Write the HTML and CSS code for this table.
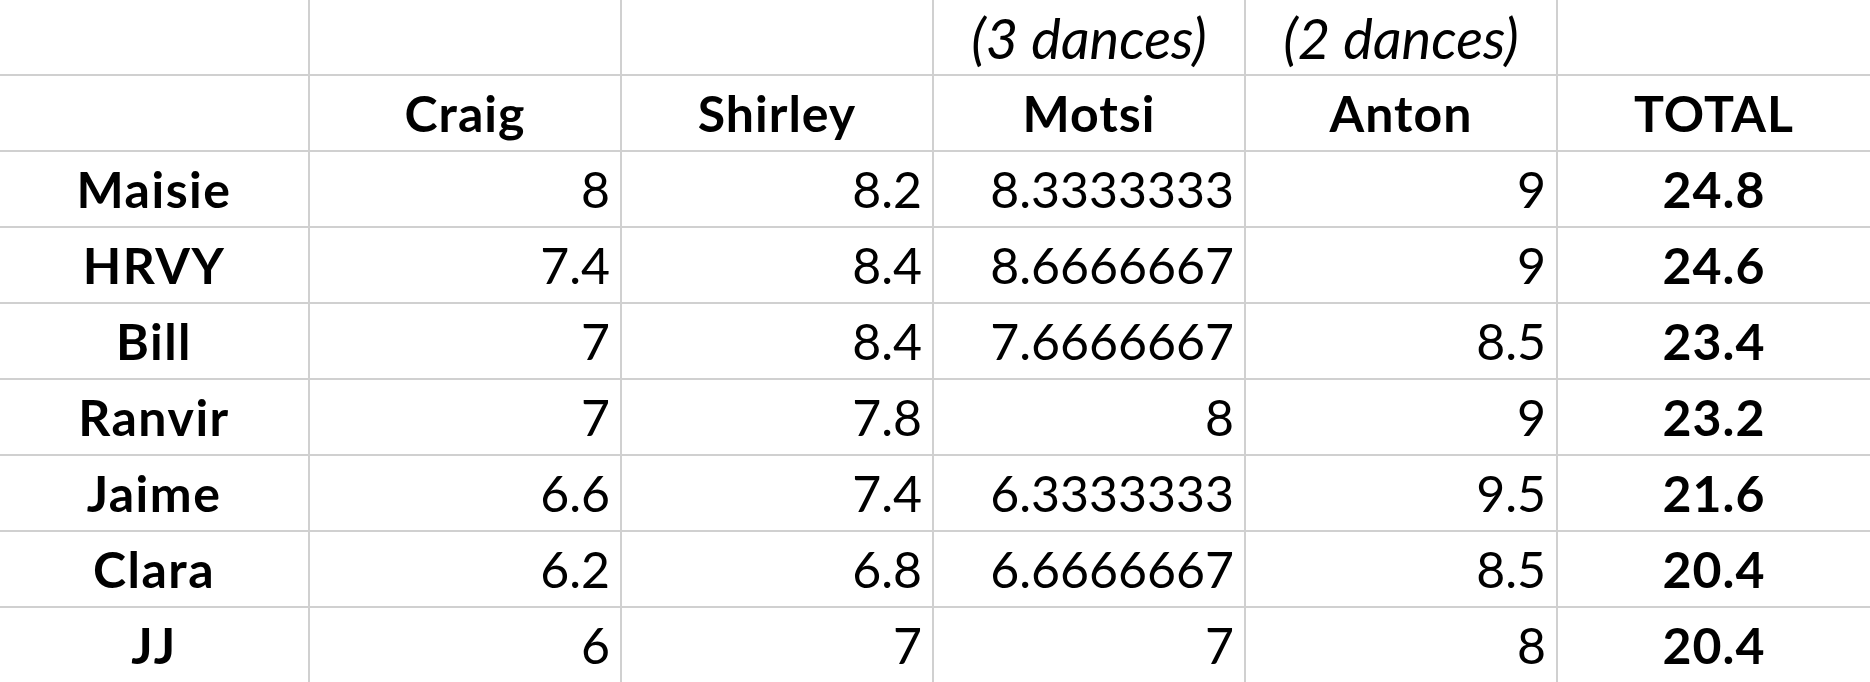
FILE: index.html
```html
<!DOCTYPE html>
<html>
<head>
<meta charset="utf-8">
<link rel="stylesheet" href="styles.css">
</head>
<body>
<div class="sheet">
  <div class="c"></div>
  <div class="c"></div>
  <div class="c"></div>
  <div class="c note">(3 dances)</div>
  <div class="c note">(2 dances)</div>
  <div class="c last"></div>

  <div class="c"></div>
  <div class="c head">Craig</div>
  <div class="c head">Shirley</div>
  <div class="c head">Motsi</div>
  <div class="c head">Anton</div>
  <div class="c head last">TOTAL</div>

  <div class="c name">Maisie</div>
  <div class="c num">8</div>
  <div class="c num">8.2</div>
  <div class="c num">8.3333333</div>
  <div class="c num">9</div>
  <div class="c total last">24.8</div>

  <div class="c name">HRVY</div>
  <div class="c num">7.4</div>
  <div class="c num">8.4</div>
  <div class="c num">8.6666667</div>
  <div class="c num">9</div>
  <div class="c total last">24.6</div>

  <div class="c name">Bill</div>
  <div class="c num">7</div>
  <div class="c num">8.4</div>
  <div class="c num">7.6666667</div>
  <div class="c num">8.5</div>
  <div class="c total last">23.4</div>

  <div class="c name">Ranvir</div>
  <div class="c num">7</div>
  <div class="c num">7.8</div>
  <div class="c num">8</div>
  <div class="c num">9</div>
  <div class="c total last">23.2</div>

  <div class="c name">Jaime</div>
  <div class="c num">6.6</div>
  <div class="c num">7.4</div>
  <div class="c num">6.3333333</div>
  <div class="c num">9.5</div>
  <div class="c total last">21.6</div>

  <div class="c name">Clara</div>
  <div class="c num">6.2</div>
  <div class="c num">6.8</div>
  <div class="c num">6.6666667</div>
  <div class="c num">8.5</div>
  <div class="c total last">20.4</div>

  <div class="c name">JJ</div>
  <div class="c num">6</div>
  <div class="c num">7</div>
  <div class="c num">7</div>
  <div class="c num">8</div>
  <div class="c total last">20.4</div>
</div>
</body>
</html>
```

FILE: styles.css
```css
html, body {
  margin: 0;
  padding: 0;
  background: #ffffff;
}

body {
  width: 1870px;
  height: 682px;
  overflow: hidden;
  font-family: Lato, "Open Sans", sans-serif;
  color: #000000;
}

.sheet {
  display: grid;
  grid-template-columns: 310px repeat(5, 312px);
  grid-auto-rows: 76px;
}

.c {
  box-sizing: border-box;
  border-right: 2px solid #d0d0d0;
  border-bottom: 2px solid #d0d0d0;
  display: flex;
  align-items: flex-end;
  justify-content: center;
  font-size: 50px;
  line-height: 60px;
  padding: 0 10px 7px 10px;
  white-space: nowrap;
}

.c.last {
  border-right: none;
}

.note {
  font-style: italic;
  font-weight: 400;
  font-size: 56px;
  padding-bottom: 6px;
}

.head,
.total {
  font-weight: 700;
  letter-spacing: 1px;
}

.name {
  font-weight: 700;
  letter-spacing: 1.5px;
}

.num {
  justify-content: flex-end;
  font-weight: 400;
}
```
